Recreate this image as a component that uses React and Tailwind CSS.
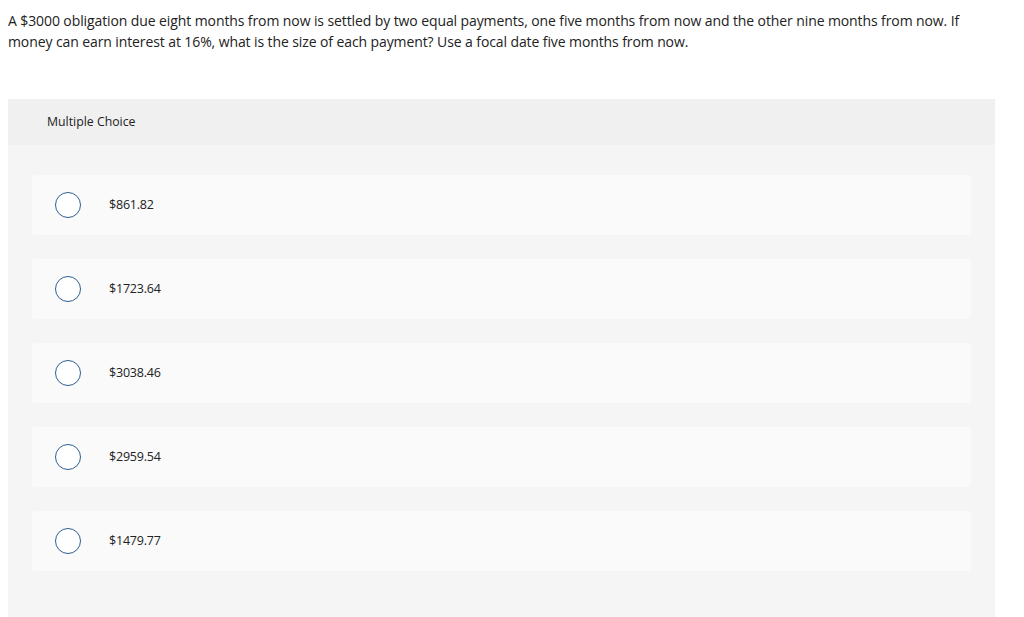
import React from "react";

const choices = ["$861.82", "$1723.64", "$3038.46", "$2959.54", "$1479.77"];

const App = () => {
  return (
    <div className="w-[1024px] h-[617px] overflow-hidden bg-white text-[#222] font-['Open_Sans',sans-serif]">
      <p className="w-[980px] px-2 pt-[10px] text-[14px] leading-[21px] tracking-[-0.1px]">
        A $3000 obligation due eight months from now is settled by two equal payments, one five months from now and the other nine months from now. If money can earn interest at 16%, what is the size of each payment? Use a focal date five months from now.
      </p>
      <section className="ml-2 mt-[47px] w-[987px] h-[600px] bg-[#f5f5f5] rounded-t-sm">
        <div className="h-[46px] bg-[#f0f0f0] flex items-center pl-[39px] text-[12.3px]">
          Multiple Choice
        </div>
        <div className="flex flex-col gap-6 pt-[30px] px-6">
          {choices.map((c) => (
            <div
              key={c}
              className="h-[60px] bg-[#fafafa] rounded-sm flex items-center pl-[23px]"
            >
              <span className="w-[26px] h-[26px] rounded-full border border-[#2b5f91] bg-white" />
              <span className="ml-[28px] text-[12.5px] tracking-[-0.2px]">{c}</span>
            </div>
          ))}
        </div>
      </section>
    </div>
  );
};

export default App;
